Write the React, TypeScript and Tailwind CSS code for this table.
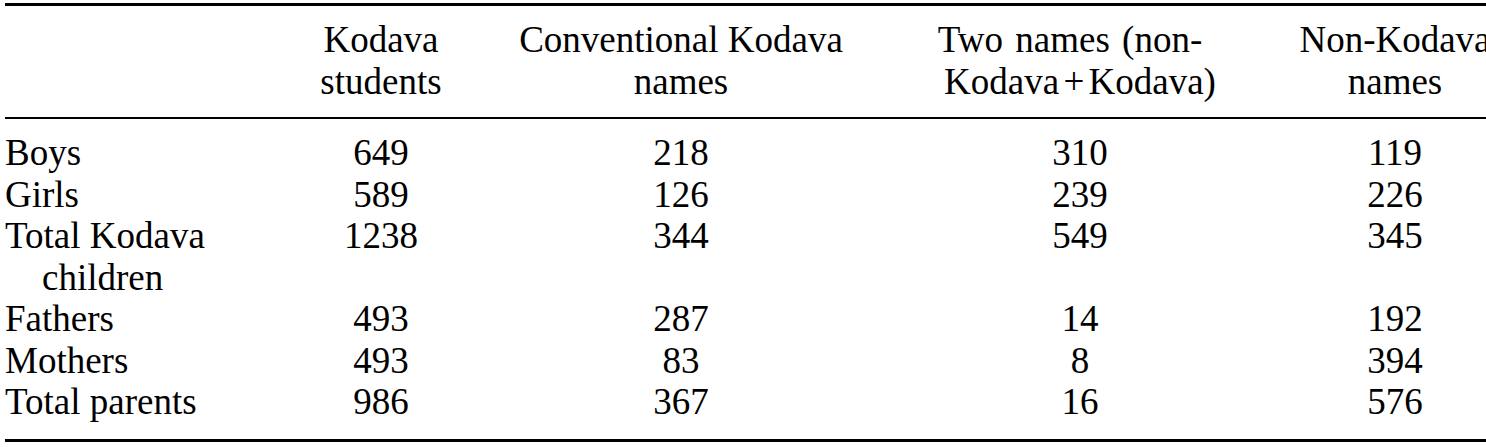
import React from "react";

const rows: { label: React.ReactNode; values: string[] }[] = [
  { label: "Boys", values: ["649", "218", "310", "119"] },
  { label: "Girls", values: ["589", "126", "239", "226"] },
  {
    label: (
      <>
        <div>Total Kodava</div>
        <div className="pl-[37px]">children</div>
      </>
    ),
    values: ["1238", "344", "549", "345"],
  },
  { label: "Fathers", values: ["493", "287", "14", "192"] },
  { label: "Mothers", values: ["493", "83", "8", "394"] },
  { label: "Total parents", values: ["986", "367", "16", "576"] },
];

const cols = "grid grid-cols-[295px_162px_438px_360px_270px]";

export default function App() {
  return (
    <div
      className="w-[1486px] h-[447px] overflow-hidden bg-white text-black"
      style={{ fontFamily: '"Liberation Serif", "Times New Roman", serif' }}
    >
      <div className="w-[1525px] ml-[5px] pt-[3px] text-[37px] leading-[41.5px]">
        <div className="h-[3px] bg-black" />
        <div className={`${cols} pt-[13px] pb-[15px] text-center`}>
          <div />
          <div>
            <div>Kodava</div>
            <div>students</div>
          </div>
          <div>
            <div>Conventional Kodava</div>
            <div>names</div>
          </div>
          <div>
            <div className="pr-[20px] [word-spacing:3px]">Two names (non-</div>
            <div className="[word-spacing:-5px]">Kodava + Kodava)</div>
          </div>
          <div>
            <div className="whitespace-nowrap">Non-Kodava</div>
            <div>names</div>
          </div>
        </div>
        <div className="h-[2px] bg-black" />
        <div className="pt-[13px] pb-[16px]">
          {rows.map((r, i) => (
            <div key={i} className={cols}>
              <div>{r.label}</div>
              {r.values.map((v, j) => (
                <div key={j} className="text-center">
                  {v}
                </div>
              ))}
            </div>
          ))}
        </div>
        <div className="h-[3px] bg-black" />
      </div>
    </div>
  );
}
